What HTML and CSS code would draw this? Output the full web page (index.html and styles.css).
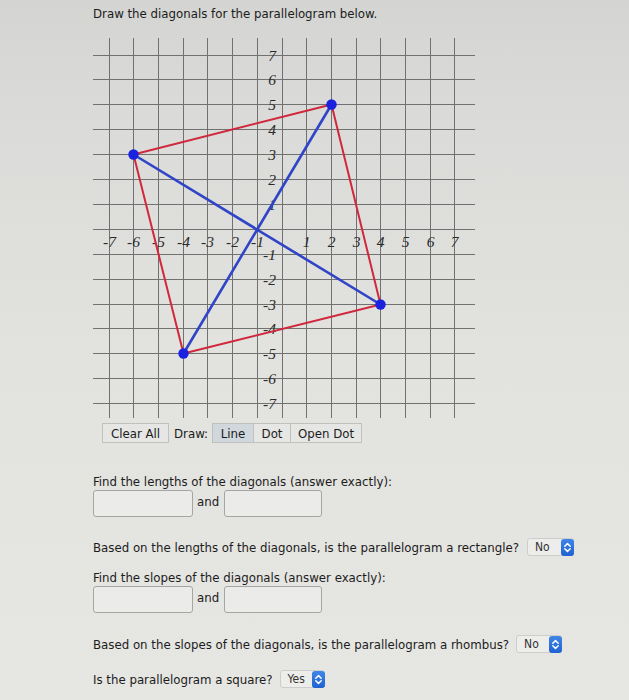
FILE: index.html
```html
<!DOCTYPE html>
<html>
<head>
<meta charset="utf-8">
<link rel="stylesheet" href="styles.css">
</head>
<body>
<div class="page">
  <p class="prompt">Draw the diagonals for the parallelogram below.</p>
  <svg class="graph" width="382" height="380" viewBox="0 0 382 380">
    <g class="grid">
      <line x1="16.5" y1="0" x2="16.5" y2="380"/>
      <line x1="40.5" y1="0" x2="40.5" y2="380"/>
      <line x1="65.5" y1="0" x2="65.5" y2="380"/>
      <line x1="90.5" y1="0" x2="90.5" y2="380"/>
      <line x1="114.5" y1="0" x2="114.5" y2="380"/>
      <line x1="139.5" y1="0" x2="139.5" y2="380"/>
      <line x1="164.5" y1="0" x2="164.5" y2="380"/>
      <line x1="189.5" y1="0" x2="189.5" y2="380"/>
      <line x1="213.5" y1="0" x2="213.5" y2="380"/>
      <line x1="238.5" y1="0" x2="238.5" y2="380"/>
      <line x1="263.5" y1="0" x2="263.5" y2="380"/>
      <line x1="287.5" y1="0" x2="287.5" y2="380"/>
      <line x1="312.5" y1="0" x2="312.5" y2="380"/>
      <line x1="337.5" y1="0" x2="337.5" y2="380"/>
      <line x1="361.5" y1="0" x2="361.5" y2="380"/>
      <line x1="0" y1="17.5" x2="382" y2="17.5"/>
      <line x1="0" y1="41.5" x2="382" y2="41.5"/>
      <line x1="0" y1="66.5" x2="382" y2="66.5"/>
      <line x1="0" y1="91.5" x2="382" y2="91.5"/>
      <line x1="0" y1="116.5" x2="382" y2="116.5"/>
      <line x1="0" y1="141.5" x2="382" y2="141.5"/>
      <line x1="0" y1="166.5" x2="382" y2="166.5"/>
      <line x1="0" y1="191.5" x2="382" y2="191.5"/>
      <line x1="0" y1="216.5" x2="382" y2="216.5"/>
      <line x1="0" y1="241.5" x2="382" y2="241.5"/>
      <line x1="0" y1="266.5" x2="382" y2="266.5"/>
      <line x1="0" y1="290.5" x2="382" y2="290.5"/>
      <line x1="0" y1="315.5" x2="382" y2="315.5"/>
      <line x1="0" y1="340.5" x2="382" y2="340.5"/>
      <line x1="0" y1="365.5" x2="382" y2="365.5"/>
    </g>
    <g class="xlabels">
      <text x="16.5" y="209">-7</text>
      <text x="40.5" y="209">-6</text>
      <text x="65.5" y="209">-5</text>
      <text x="90.5" y="209">-4</text>
      <text x="114.5" y="209">-3</text>
      <text x="139.5" y="209">-2</text>
      <text x="164.5" y="209">-1</text>
      <text x="213.5" y="209">1</text>
      <text x="238.5" y="209">2</text>
      <text x="263.5" y="209">3</text>
      <text x="287.5" y="209">4</text>
      <text x="312.5" y="209">5</text>
      <text x="337.5" y="209">6</text>
      <text x="361.5" y="209">7</text>
    </g>
    <g class="ylabels">
      <text x="183" y="22.5">7</text>
      <text x="183" y="46.5">6</text>
      <text x="183" y="71.5">5</text>
      <text x="183" y="96.5">4</text>
      <text x="183" y="121.5">3</text>
      <text x="183" y="146.5">2</text>
      <text x="183" y="171.5">1</text>
      <text x="183" y="221.5">-1</text>
      <text x="183" y="246.5">-2</text>
      <text x="183" y="271.5">-3</text>
      <text x="183" y="295.5">-4</text>
      <text x="183" y="320.5">-5</text>
      <text x="183" y="345.5">-6</text>
      <text x="183" y="370.5">-7</text>
    </g>
    <polygon class="sides" points="40.5,116.5 238.5,66.5 287.5,266.5 90.5,315.5"/>
    <line class="diag" x1="40.5" y1="116.5" x2="287.5" y2="266.5"/>
    <line class="diag" x1="238.5" y1="66.5" x2="90.5" y2="315.5"/>
    <g class="pts">
      <circle cx="40.5" cy="116.5" r="5.2"/>
      <circle cx="238.5" cy="66.5" r="5.2"/>
      <circle cx="287.5" cy="266.5" r="5.2"/>
      <circle cx="90.5" cy="315.5" r="5.2"/>
    </g>
  </svg>
  <div class="toolbar">
    <span class="btn clear">Clear All</span>
    <span class="draw-label">Draw:</span>
    <div class="group">
      <span class="btn seg active">Line</span>
      <span class="btn seg">Dot</span>
      <span class="btn seg">Open Dot</span>
    </div>
  </div>

  <p class="q q-lengths">Find the lengths of the diagonals (answer exactly):</p>
  <div class="pair">
    <span class="box wide"></span><span class="and">and</span><span class="box"></span>
  </div>

  <div class="q-row q-rect">
    <span>Based on the lengths of the diagonals, is the parallelogram a rectangle?</span>
    <span class="select"><span class="val">No</span><span class="step"><svg width="9" height="11" viewBox="0 0 9 11"><path d="M1.8 4.2 L4.5 1.6 L7.2 4.2 M1.8 6.8 L4.5 9.4 L7.2 6.8"/></svg></span></span>
  </div>

  <p class="q q-slopes">Find the slopes of the diagonals (answer exactly):</p>
  <div class="pair">
    <span class="box wide"></span><span class="and">and</span><span class="box"></span>
  </div>

  <div class="q-row q-rhombus">
    <span>Based on the slopes of the diagonals, is the parallelogram a rhombus?</span>
    <span class="select"><span class="val">No</span><span class="step"><svg width="9" height="11" viewBox="0 0 9 11"><path d="M1.8 4.2 L4.5 1.6 L7.2 4.2 M1.8 6.8 L4.5 9.4 L7.2 6.8"/></svg></span></span>
  </div>

  <div class="q-row q-square">
    <span>Is the parallelogram a square?</span>
    <span class="select"><span class="val">Yes</span><span class="step"><svg width="9" height="11" viewBox="0 0 9 11"><path d="M1.8 4.2 L4.5 1.6 L7.2 4.2 M1.8 6.8 L4.5 9.4 L7.2 6.8"/></svg></span></span>
  </div>
</div>
</body>
</html>
```

FILE: styles.css
```css
html, body {
  margin: 0;
  padding: 0;
}
body {
  background: linear-gradient(180deg, #d4d4d2 0px, #dadad8 100px, #e2e2df 350px, #e6e6e3 700px);
  font-family: "DejaVu Sans Condensed", "DejaVu Sans", sans-serif;
  font-size: 13.1px;
  color: #1c1c1c;
  height: 700px;
  overflow: hidden;
}
.page {
  padding: 6px 0 0 93px;
}
.prompt {
  margin: 0;
  line-height: 16px;
}
.graph {
  display: block;
  margin-top: 16px;
}
.grid line {
  stroke: #717171;
  stroke-width: 1;
}
.xlabels text, .ylabels text {
  font-family: "Liberation Serif", serif;
  font-style: italic;
  font-size: 15.5px;
  fill: #2a2a2a;
}
.xlabels text { text-anchor: middle; }
.ylabels text { text-anchor: end; }
.sides {
  fill: none;
  stroke: #d0283c;
  stroke-width: 2;
}
.diag {
  stroke: #3044c8;
  stroke-width: 2.6;
}
.pts circle {
  fill: #1a22e0;
}
.toolbar {
  display: flex;
  align-items: center;
  margin: 5px 0 0 9px;
  height: 20px;
}
.btn {
  display: inline-flex;
  align-items: center;
  justify-content: center;
  height: 20px;
  box-sizing: border-box;
  border: 1px solid #c0c0be;
  background: #e6e6e4;
  color: #1c1c1c;
}
.clear { width: 67px; }
.draw-label { margin: 0 4px 0 5px; }
.group { display: flex; }
.seg { margin-left: -1px; }
.seg:first-child { margin-left: 0; width: 42px; }
.seg:nth-child(2) { width: 38px; }
.seg:nth-child(3) { width: 72px; }
.active { background: #d0d8de; }

.q {
  margin: 0;
  line-height: 16px;
}
.q-lengths { margin-top: 31px; }
.q-slopes { margin-top: 14px; }
.pair {
  display: flex;
  align-items: center;
}
.box {
  display: block;
  width: 98px;
  height: 27px;
  box-sizing: border-box;
  border: 1px solid #a5a5a3;
  border-radius: 3px;
  background: #ebebe9;
}
.box.wide { width: 100px; }
.and {
  margin: 0 5px 0 4px;
  position: relative;
  top: -2px;
}
.q-row {
  display: flex;
  align-items: center;
  height: 18px;
}
.q-rect { margin-top: 21px; }
.q-rhombus { margin-top: 22px; }
.q-square { margin-top: 17px; }
.select {
  display: inline-flex;
  align-items: center;
  height: 18px;
  box-sizing: border-box;
  border: 1px solid #cdcdcb;
  border-radius: 3px;
  background: #ededeb;
  margin-left: 8px;
  font-size: 12px;
  color: #333;
}
.q-rect .select { width: 47px; }
.q-rhombus .select { width: 46px; margin-left: 7px; }
.q-square .select { width: 45px; margin-left: 7px; }
.val {
  flex: 1;
  padding-left: 7px;
}
.step {
  width: 13px;
  height: 17px;
  margin-right: -1px;
  border-radius: 3px;
  background: linear-gradient(180deg, #3f86e8, #1f62d0);
  display: flex;
  align-items: center;
  justify-content: center;
}
.step path {
  fill: none;
  stroke: #fff;
  stroke-width: 1.5;
  stroke-linecap: round;
  stroke-linejoin: round;
}
```
